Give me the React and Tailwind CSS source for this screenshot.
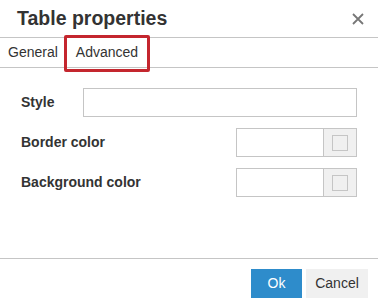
import React from "react";

const ColorField = ({ label }) => (
  <div className="flex items-center h-[29px] pl-[21px] pr-[21px]">
    <span className="font-bold text-[14px] text-[#333]">{label}</span>
    <div className="ml-auto flex w-[121px] h-[29px] border border-[#c5c5c5] bg-white">
      <div className="flex-1" />
      <div className="w-[33px] h-full bg-[#f0f0f0] border-l border-[#c5c5c5] flex items-center justify-center">
        <div className="w-[16px] h-[16px] border border-[#c5c5c5]" />
      </div>
    </div>
  </div>
);

const App = () => {
  return (
    <div
      className="w-[378px] h-[308px] bg-white flex flex-col text-[#333]"
      style={{ fontFamily: '"Liberation Sans", Arial, sans-serif' }}
    >
      <div className="h-[38px] shrink-0 border-b border-[#c5c5c5] flex items-center justify-between pl-[17px] pr-[13px]">
        <h1 className="text-[19.5px] font-bold leading-none text-[#333]">Table properties</h1>
        <button className="w-[14px] h-[14px] flex items-center justify-center text-[#777]">
          <svg width="12" height="12" viewBox="0 0 12 12">
            <path d="M1 1 L11 11 M11 1 L1 11" stroke="currentColor" strokeWidth="1.8" />
          </svg>
        </button>
      </div>

      <div className="h-[30px] shrink-0 border-b border-[#c5c5c5] flex items-center text-[14px]">
        <span className="pl-[8px] pr-[18px]">General</span>
        <span className="relative">
          Advanced
          <span className="absolute left-[-12px] right-[-12px] top-[-7px] bottom-[-9px] border-[3px] border-[#c4262e] rounded-[2px]" />
        </span>
      </div>

      <div className="flex-1 flex flex-col gap-[11px] pt-[20px]">
        <div className="flex items-center h-[29px] pl-[21px] pr-[21px]">
          <span className="font-bold text-[14px] text-[#333]">Style</span>
          <div className="ml-auto w-[274px] h-[29px] border border-[#c5c5c5] bg-white" />
        </div>
        <ColorField label="Border color" />
        <ColorField label="Background color" />
      </div>

      <div className="h-[50px] shrink-0 border-t border-[#c5c5c5] flex items-center justify-end gap-[4px] pr-[10px]">
        <button className="w-[51px] h-[29px] bg-[#2e8ccb] text-white text-[14px]">Ok</button>
        <button className="w-[62px] h-[29px] bg-[#f0f0f0] text-[#333] text-[14px]">Cancel</button>
      </div>
    </div>
  );
};

export default App;
